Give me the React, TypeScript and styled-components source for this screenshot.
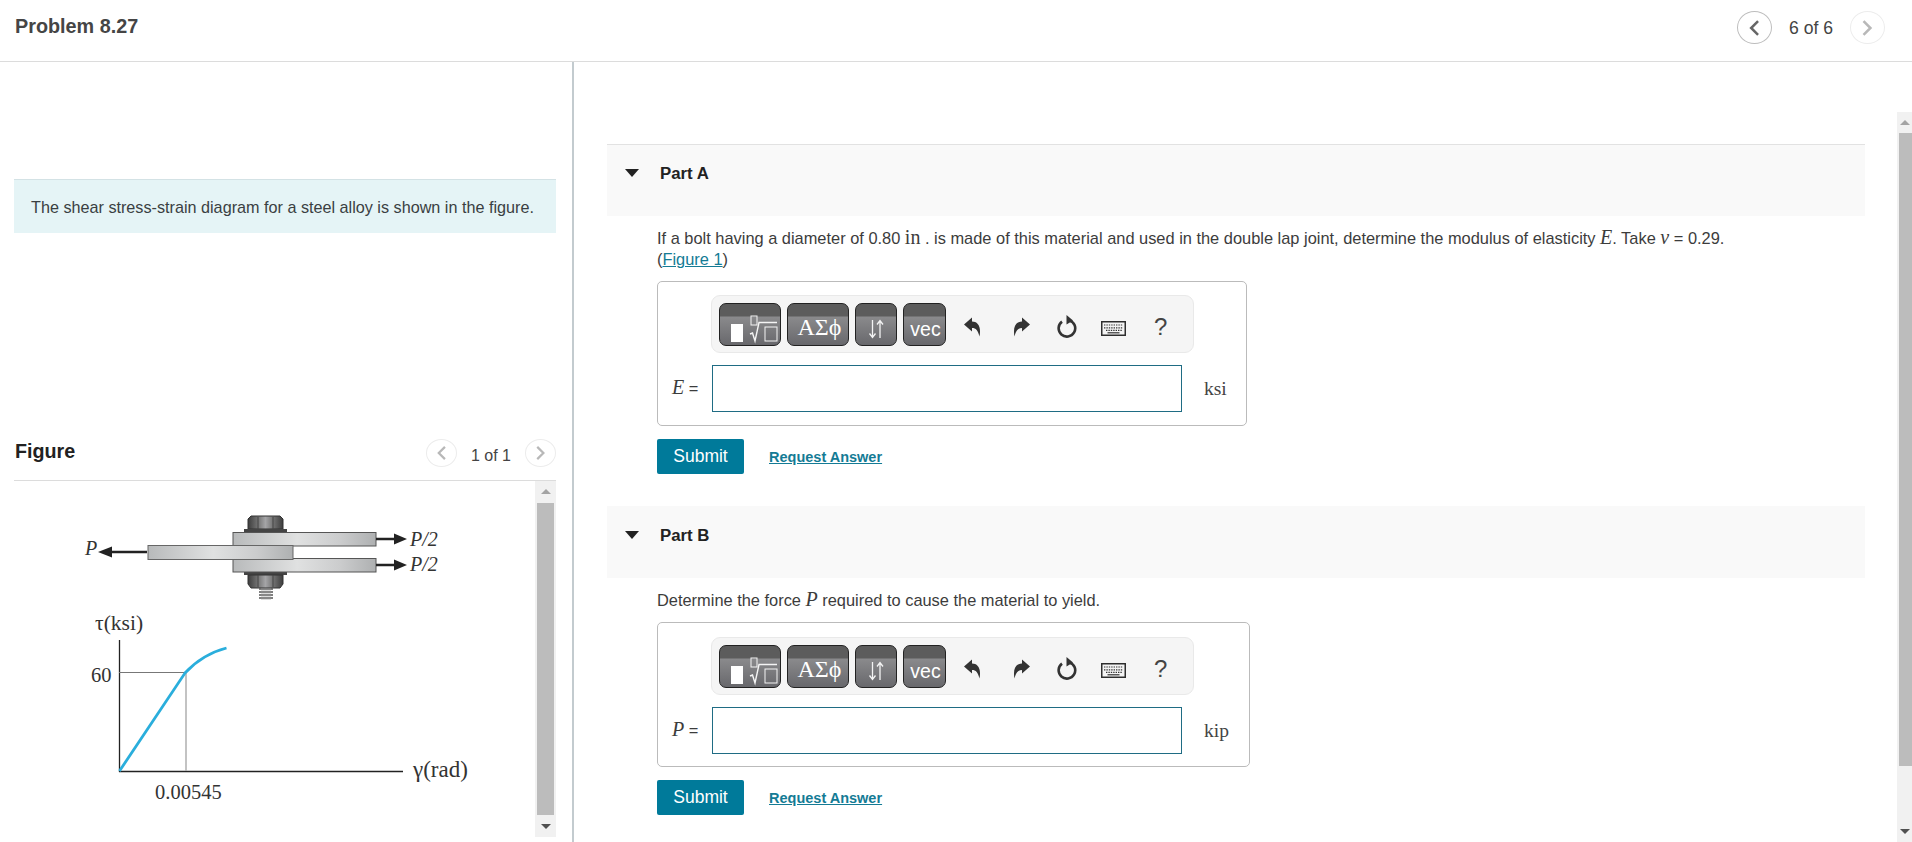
import styled, { createGlobalStyle } from "styled-components";

const GlobalStyle = createGlobalStyle`
  html, body {
    margin: 0;
    height: 842px;
    overflow: hidden;
    background: #fff;
    font-family: "Liberation Sans", Arial, sans-serif;
    color: #3c3c3c;
  }
`;

const Page = styled.div`
  display: flex;
  flex-direction: column;
  height: 842px;
`;

const TopBar = styled.header`
  display: flex;
  flex: none;
  align-items: center;
  justify-content: space-between;
  box-sizing: border-box;
  height: 62px;
  padding: 0 27px 6px 15px;
  border-bottom: 1px solid #dcdcdc;
`;

const ProblemTitle = styled.h1`
  margin: 0 0 2px;
  font-size: 19.8px;
  font-weight: 700;
  color: #454545;
`;

const Pager = styled.nav<{ $large?: boolean }>`
  display: flex;
  align-items: center;
  gap: ${(p) => (p.$large ? "17px" : "14px")};
  font-size: ${(p) => (p.$large ? "17.6px" : "16px")};
  color: #444;
`;

const PagerText = styled.span<{ $drop: number }>`
  padding-top: ${(p) => p.$drop}px;
`;

const PagerButton = styled.span<{ $large?: boolean; $active?: boolean }>`
  display: flex;
  align-items: center;
  justify-content: center;
  box-sizing: border-box;
  width: ${(p) => (p.$large ? "35px" : "31px")};
  height: ${(p) => (p.$large ? "33px" : "28px")};
  border: 1px solid ${(p) => (p.$active ? "#bdbdbd" : "#ececec")};
  border-radius: 50%;
  color: ${(p) => (p.$active ? "#666" : "#b8b8b8")};
`;

const Main = styled.main`
  display: flex;
  flex: 1;
  min-height: 0;
`;

const LeftPanel = styled.aside`
  display: flex;
  flex: none;
  flex-direction: column;
  box-sizing: border-box;
  width: 574px;
  padding-left: 14px;
  padding-right: 16px;
  border-right: 2px solid #c3cbcf;
`;

const IntroArea = styled.div`
  flex: none;
  box-sizing: border-box;
  height: 368px;
  padding-top: 117px;
`;

const IntroBox = styled.div`
  box-sizing: border-box;
  height: 54px;
  padding-left: 17px;
  border-top: 1px solid #d3e2e5;
  background: #e5f4f6;
  font-size: 16.2px;
  line-height: 55px;
  color: #3a3f42;
`;

const FigureHeader = styled.div`
  display: flex;
  flex: none;
  align-items: center;
  justify-content: space-between;
  box-sizing: border-box;
  height: 51px;
  padding-bottom: 4px;
  border-bottom: 1px solid #dcdcdc;
`;

const FigureTitle = styled.h2`
  margin: 0 0 4px 1px;
  font-size: 19.7px;
  font-weight: 700;
  color: #222;
`;

const FigureBody = styled.div`
  display: flex;
  height: 356px;
`;

const FigureCanvas = styled.svg`
  flex: none;
  width: 521px;
  height: 356px;

  text {
    font-family: "Liberation Serif", "Times New Roman", serif;
    fill: #333;
  }
`;

const Scrollbar = styled.div<{ $width: number }>`
  display: flex;
  flex: none;
  flex-direction: column;
  align-items: flex-end;
  justify-content: space-between;
  box-sizing: border-box;
  width: ${(p) => p.$width}px;
  background: #f1f1f1;
`;

const ScrollArrow = styled.span<{ $down?: boolean }>`
  display: block;
  flex: none;
  width: 0;
  height: 0;
  margin: 8px auto;
  border-left: 5px solid transparent;
  border-right: 5px solid transparent;
  ${(p) => (p.$down ? "border-top: 5px solid #505050;" : "border-bottom: 5px solid #a3a3a3;")}
`;

const ScrollThumb = styled.div<{ $height: number; $inset: number }>`
  flex: none;
  box-sizing: border-box;
  width: calc(100% - ${(p) => p.$inset}px);
  height: ${(p) => p.$height}px;
  margin-right: ${(p) => (p.$inset > 2 ? 2 : 0)}px;
  background: #bcbcbc;
`;

const ScrollGap = styled.div`
  flex: 1;
`;

const RightPanel = styled.section`
  flex: 1;
  min-width: 0;
  box-sizing: border-box;
  padding: 82px 32px 0 33px;
`;

const PageScroll = styled(Scrollbar)`
  height: 730px;
  margin-top: 50px;
`;

const PartHead = styled.div<{ $ruled?: boolean }>`
  display: flex;
  align-items: flex-start;
  box-sizing: border-box;
  height: 72px;
  padding: 19px 0 0 18px;
  border-top: 1px solid ${(p) => (p.$ruled ? "#e2e2e2" : "#f9f9f9")};
  background: #f9f9f9;
`;

const Caret = styled.span`
  flex: none;
  width: 0;
  height: 0;
  margin-top: 5px;
  border-left: 7px solid transparent;
  border-right: 7px solid transparent;
  border-top: 8px solid #222;
`;

const PartTitle = styled.h3`
  margin: 0 0 0 21px;
  font-size: 16.8px;
  line-height: 20px;
  font-weight: 700;
  color: #222;
`;

const PartContent = styled.div`
  padding: 12px 0 32px 50px;
`;

const Prompt = styled.p`
  margin: 0;
  font-size: 16.4px;
  line-height: 21px;
  color: #3c3c3c;
`;

const MathItalic = styled.i`
  font-family: "Liberation Serif", "Times New Roman", serif;
  font-size: 20px;
  line-height: 0;
`;

const MathUpright = styled.span`
  font-family: "Liberation Serif", "Times New Roman", serif;
  font-size: 20px;
  line-height: 0;
`;

const TextLink = styled.a`
  color: #147b95;
  text-decoration: underline;
`;

const AnswerBox = styled.div<{ $width: number; $padTop: number }>`
  box-sizing: border-box;
  width: ${(p) => p.$width}px;
  height: 145px;
  margin-top: 11px;
  padding-top: ${(p) => p.$padTop}px;
  border: 1px solid #bbb;
  border-radius: 5px;
`;

const Toolbar = styled.div`
  display: flex;
  align-items: center;
  box-sizing: border-box;
  width: 483px;
  height: 58px;
  margin-left: 53px;
  padding-left: 7px;
  border: 1px solid #e9e9e9;
  border-radius: 9px;
  background: #f5f5f5;
`;

const MathButton = styled.span<{ $width: number }>`
  display: flex;
  flex: none;
  align-items: center;
  justify-content: center;
  box-sizing: border-box;
  width: ${(p) => p.$width}px;
  height: 43px;
  margin-right: 6px;
  padding-top: 10px;
  overflow: hidden;
  border: 1px solid #222;
  border-radius: 7px;
  background: linear-gradient(#5c5c5c 0, #5c5c5c 12px, #8a8a8c 13px, #68686c 100%);
  color: #fff;
`;

const GreekLabel = styled.span`
  margin: -3px 0 0 3px;
  font-family: "Liberation Serif", "Times New Roman", serif;
  font-size: 24px;
`;

const VecLabel = styled.span`
  margin-left: 2px;
  font-family: "Liberation Sans", Arial, sans-serif;
  font-size: 19.5px;
`;

const ToolIcon = styled.span<{ $gap: number; $drop: number }>`
  display: flex;
  flex: none;
  align-items: center;
  margin-left: ${(p) => p.$gap}px;
  margin-top: ${(p) => p.$drop}px;
  color: #333;
`;

const HelpMark = styled.span`
  margin-left: 28px;
  margin-top: 5px;
  font-size: 24px;
  color: #444;
`;

const AnswerRow = styled.div`
  display: flex;
  align-items: center;
  height: 47px;
  margin-top: 12px;
`;

const AnswerLabel = styled.label`
  flex: none;
  box-sizing: border-box;
  width: 54px;
  padding-left: 14px;
  font-size: 16.4px;
`;

const AnswerInput = styled.input`
  flex: none;
  box-sizing: border-box;
  width: 470px;
  height: 47px;
  border: 1px solid #1f6c84;
  background: #fff;
`;

const UnitLabel = styled.span`
  margin-left: 22px;
  font-family: "Liberation Serif", "Times New Roman", serif;
  font-size: 19.5px;
  color: #444;
`;

const ActionRow = styled.div`
  display: flex;
  align-items: center;
  gap: 25px;
  margin-top: 13px;
`;

const SubmitButton = styled.button`
  width: 87px;
  height: 35px;
  padding: 0;
  border: 0;
  border-radius: 2px;
  background: #007a9a;
  font-family: inherit;
  font-size: 17.5px;
  color: #fff;
`;

const AnswerLink = styled(TextLink)`
  font-size: 14.5px;
  font-weight: 700;
`;

const Chevron = ({ dir, size }: { dir: "left" | "right"; size: number }) => (
  <svg width={size * 0.7} height={size} viewBox="0 0 10 14" fill="none" stroke="currentColor" strokeWidth="2">
    <path d={dir === "left" ? "M8 1.5 L2.5 7 L8 12.5" : "M2 1.5 L7.5 7 L2 12.5"} />
  </svg>
);

const UndoIcon = ({ flip }: { flip?: boolean }) => (
  <svg width="17" height="20" viewBox="0 0 17 20" fill="currentColor" style={flip ? { transform: "scaleX(-1)" } : undefined}>
    <path d="M0 7.5 L8 0.5 V4.5 C13.5 4.5 17.5 9 15.5 19.5 C14 13.5 12 11 8 11 V14.5 Z" />
  </svg>
);

const ResetIcon = () => (
  <svg width="20" height="23" viewBox="0 0 20 23" fill="none" stroke="currentColor" strokeWidth="2.6">
    <path d="M5 6.6 A8.3 8.3 0 1 0 12.5 5.4" />
    <path d="M9.5 0 L16 5.4 L9.5 9.6 Z" fill="currentColor" stroke="none" />
  </svg>
);

const KeyboardIcon = () => (
  <svg width="25" height="15" viewBox="0 0 25 15">
    <rect x="0.75" y="0.75" width="23.5" height="13.5" fill="#f4f4f4" stroke="#2e2e2e" strokeWidth="1.5" />
    <path d="M3 4 H22 M3 6.8 H22 M5 9.4 H21" stroke="#333" strokeWidth="1.2" strokeDasharray="1.4 1" />
    <path d="M6.5 11.8 H18.5" stroke="#333" strokeWidth="1.2" />
  </svg>
);

const TemplatesGlyph = () => (
  <svg width="60" height="33" viewBox="0 0 60 33" fill="none" stroke="#f4f4f4" strokeWidth="1">
    <rect x="11" y="11" width="12" height="18" fill="#fff" stroke="none" />
    <rect x="31" y="3" width="6" height="9" />
    <path d="M30 21 L32.5 20 L35 28 L39 9.5 H57" strokeWidth="1.4" />
    <rect x="45" y="14" width="12" height="14" />
  </svg>
);

const ArrowsGlyph = () => (
  <svg width="17" height="20" viewBox="0 0 17 20" fill="none" stroke="#f4f4f4" strokeWidth="1.3">
    <path d="M4.5 1 V18 M1.5 14.5 L4.5 18.5 L7.5 14.5" />
    <path d="M12 19 V2 M9 5.5 L12 1.5 L15 5.5" />
  </svg>
);

const MathToolbar = () => (
  <Toolbar>
    <MathButton $width={62}>
      <TemplatesGlyph />
    </MathButton>
    <MathButton $width={62}>
      <GreekLabel>ΑΣϕ</GreekLabel>
    </MathButton>
    <MathButton $width={42}>
      <ArrowsGlyph />
    </MathButton>
    <MathButton $width={43}>
      <VecLabel>vec</VecLabel>
    </MathButton>
    <ToolIcon $gap={12} $drop={5}>
      <UndoIcon />
    </ToolIcon>
    <ToolIcon $gap={32} $drop={5}>
      <UndoIcon flip />
    </ToolIcon>
    <ToolIcon $gap={27} $drop={5}>
      <ResetIcon />
    </ToolIcon>
    <ToolIcon $gap={24} $drop={9}>
      <KeyboardIcon />
    </ToolIcon>
    <HelpMark>?</HelpMark>
  </Toolbar>
);

const Part = ({
  title,
  ruled,
  boxWidth,
  padTop,
  symbol,
  unit,
  children,
}: {
  title: string;
  ruled?: boolean;
  boxWidth: number;
  padTop: number;
  symbol: string;
  unit: string;
  children: React.ReactNode;
}) => (
  <article>
    <PartHead $ruled={ruled}>
      <Caret />
      <PartTitle>{title}</PartTitle>
    </PartHead>
    <PartContent>
      <Prompt>{children}</Prompt>
      <AnswerBox $width={boxWidth} $padTop={padTop}>
        <MathToolbar />
        <AnswerRow>
          <AnswerLabel>
            <MathItalic>{symbol}</MathItalic> =
          </AnswerLabel>
          <AnswerInput type="text" aria-label={symbol} />
          <UnitLabel>{unit}</UnitLabel>
        </AnswerRow>
      </AnswerBox>
      <ActionRow>
        <SubmitButton>Submit</SubmitButton>
        <AnswerLink href="#">Request Answer</AnswerLink>
      </ActionRow>
    </PartContent>
  </article>
);

// drawn in page coordinates, hence the viewBox origin
const JointAndChart = () => (
  <FigureCanvas viewBox="14 481 521 356">
    <defs>
      <linearGradient id="plate" x1="0" x2="1" y1="0" y2="0">
        <stop offset="0" stopColor="#b8babb" />
        <stop offset="0.45" stopColor="#e0e1e1" />
        <stop offset="0.75" stopColor="#cbcccd" />
        <stop offset="1" stopColor="#aeb0b1" />
      </linearGradient>
      <linearGradient id="bolt" x1="0" x2="1" y1="0" y2="0">
        <stop offset="0" stopColor="#3d3d3d" />
        <stop offset="0.3" stopColor="#777" />
        <stop offset="0.5" stopColor="#a5a5a7" />
        <stop offset="0.7" stopColor="#777" />
        <stop offset="1" stopColor="#3d3d3d" />
      </linearGradient>
    </defs>

    <path d="M251 516 H280 L283 519 V529 H248 V519 Z" fill="url(#bolt)" stroke="#333" />
    <path d="M258 517 V529 M273 517 V529" stroke="#444" strokeWidth="1" />
    <rect x="244" y="529" width="43" height="3" fill="#444" />
    <rect x="244" y="572" width="43" height="3" fill="#444" />
    <path d="M248 575 H283 V584 L280 588 H251 L248 584 Z" fill="url(#bolt)" stroke="#333" />
    <path d="M258 575 V587 M273 575 V587" stroke="#444" strokeWidth="1" />
    <path d="M259 589 H273 M259 592 H273 M259 595 H273 M259 598 H273" stroke="#555" strokeWidth="1.6" />
    <rect x="261" y="588" width="10" height="12" fill="#999" fillOpacity="0.35" />

    <rect x="233" y="532.5" width="143" height="13.5" fill="url(#plate)" stroke="#555" />
    <rect x="233" y="558.5" width="143" height="13.5" fill="url(#plate)" stroke="#555" />
    <rect x="148" y="545.5" width="145" height="14" fill="url(#plate)" stroke="#666" />

    <path d="M147 552 H109" stroke="#222" strokeWidth="2.6" />
    <path d="M98 552 L112 546.5 V557.5 Z" fill="#222" />
    <path d="M376 539 H398 M376 565 H398" stroke="#222" strokeWidth="2.6" />
    <path d="M407 539 L394 533.5 V544.5 Z M407 565 L394 559.5 V570.5 Z" fill="#222" />

    <text x="85" y="555" fontSize="20" fontStyle="italic">P</text>
    <text x="410" y="546" fontSize="20" fontStyle="italic">P/2</text>
    <text x="410" y="571" fontSize="20" fontStyle="italic">P/2</text>

    <path d="M119.5 640 V772 M119 771.5 H403" stroke="#222" strokeWidth="1.3" fill="none" />
    <path d="M119 672.5 H185" stroke="#777" strokeWidth="1" />
    <path d="M186 673 V771" stroke="#aaa" strokeWidth="1.4" />
    <path d="M119.5 771 L185 673 C197 660 211 652 226.5 648" stroke="#2aaedc" strokeWidth="2.8" fill="none" />

    <text x="95" y="630" fontSize="21.5">τ(ksi)</text>
    <text x="91" y="682" fontSize="20.5">60</text>
    <text x="155" y="799" fontSize="20.5">0.00545</text>
    <text x="413" y="777" fontSize="23">γ(rad)</text>
  </FigureCanvas>
);

const App = () => {
  return (
    <Page>
      <GlobalStyle />
      <TopBar>
        <ProblemTitle>Problem 8.27</ProblemTitle>
        <Pager $large>
          <PagerButton $large $active>
            <Chevron dir="left" size={18} />
          </PagerButton>
          <PagerText $drop={1}>6 of 6</PagerText>
          <PagerButton $large>
            <Chevron dir="right" size={18} />
          </PagerButton>
        </Pager>
      </TopBar>
      <Main>
        <LeftPanel>
          <IntroArea>
            <IntroBox>The shear stress-strain diagram for a steel alloy is shown in the figure.</IntroBox>
          </IntroArea>
          <FigureHeader>
            <FigureTitle>Figure</FigureTitle>
            <Pager>
              <PagerButton>
                <Chevron dir="left" size={16} />
              </PagerButton>
              <PagerText $drop={6}>1 of 1</PagerText>
              <PagerButton>
                <Chevron dir="right" size={16} />
              </PagerButton>
            </Pager>
          </FigureHeader>
          <FigureBody>
            <JointAndChart />
            <Scrollbar $width={21}>
              <ScrollArrow />
              <ScrollThumb $height={312} $inset={4} />
              <ScrollArrow $down />
            </Scrollbar>
          </FigureBody>
        </LeftPanel>
        <RightPanel>
          <Part title="Part A" ruled boxWidth={590} padTop={13} symbol="E" unit="ksi">
            If a bolt having a diameter of 0.80 <MathUpright>in</MathUpright> . is made of this material and used in the
            double lap joint, determine the modulus of elasticity <MathItalic>E</MathItalic>. Take{" "}
            <MathItalic>ν</MathItalic> = 0.29.
            <br />(<TextLink href="#">Figure 1</TextLink>)
          </Part>
          <Part title="Part B" boxWidth={593} padTop={14} symbol="P" unit="kip">
            Determine the force <MathItalic>P</MathItalic> required to cause the material to yield.
          </Part>
        </RightPanel>
        <PageScroll $width={15}>
          <ScrollArrow />
          <ScrollThumb $height={633} $inset={2} />
          <ScrollGap />
          <ScrollArrow $down />
        </PageScroll>
      </Main>
    </Page>
  );
};

export default App;
